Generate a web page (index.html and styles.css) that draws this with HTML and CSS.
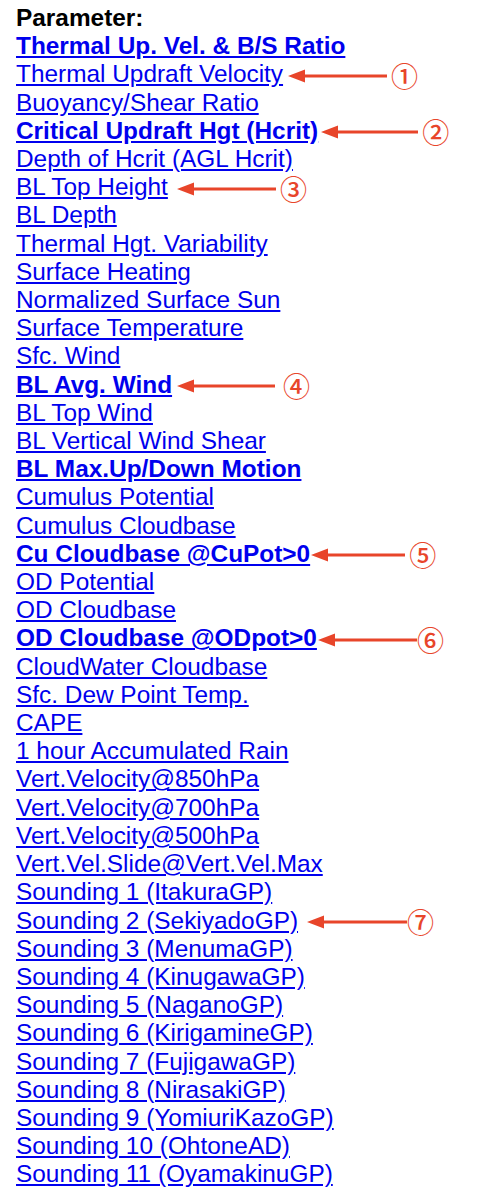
FILE: index.html
```html
<!DOCTYPE html>
<html lang="en">
<head>
    <meta charset="UTF-8">
    <meta name="viewport" content="width=device-width, initial-scale=1.0">
    <title>Parameter</title>
    <link rel="stylesheet" href="styles.css">
</head>
<body>
    <div class="param-list">
        <div class="param-title">Parameter:</div>

        <div><a href="#" class="strong">Thermal Up. Vel. &amp; B/S Ratio</a></div>
        <div>
            <a href="#">Thermal Updraft Velocity</a><span class="note"><svg class="arrow" width="99" height="14" viewBox="0 0 99 14"><path d="M0 7 L17 0.5 L17 5.5 L99 5.5 L99 8.5 L17 8.5 L17 13.5 Z"/></svg><span class="num">①</span></span>
        </div>
        <div><a href="#">Buoyancy/Shear Ratio</a></div>
        <div>
            <a href="#" class="strong">Critical Updraft Hgt (Hcrit)</a><span class="note note-tight"><svg class="arrow" width="97" height="14" viewBox="0 0 97 14"><path d="M0 7 L17 0.5 L17 5.5 L97 5.5 L97 8.5 L17 8.5 L17 13.5 Z"/></svg><span class="num">②</span></span>
        </div>
        <div><a href="#">Depth of Hcrit (AGL Hcrit)</a></div>
        <div>
            <a href="#">BL Top Height</a><span class="note note-wide"><svg class="arrow" width="99" height="14" viewBox="0 0 99 14"><path d="M0 7 L17 0.5 L17 5.5 L99 5.5 L99 8.5 L17 8.5 L17 13.5 Z"/></svg><span class="num">③</span></span>
        </div>
        <div><a href="#">BL Depth</a></div>
        <div><a href="#">Thermal Hgt. Variability</a></div>
        <div><a href="#">Surface Heating</a></div>
        <div><a href="#">Normalized Surface Sun</a></div>
        <div><a href="#">Surface Temperature</a></div>
        <div><a href="#">Sfc. Wind</a></div>
        <div>
            <a href="#" class="strong">BL Avg. Wind</a><span class="note"><svg class="arrow" width="98" height="14" viewBox="0 0 98 14"><path d="M0 7 L17 0.5 L17 5.5 L98 5.5 L98 8.5 L17 8.5 L17 13.5 Z"/></svg><span class="num num-far">④</span></span>
        </div>
        <div><a href="#">BL Top Wind</a></div>
        <div><a href="#">BL Vertical Wind Shear</a></div>
        <div><a href="#" class="strong">BL Max.Up/Down Motion</a></div>
        <div><a href="#">Cumulus Potential</a></div>
        <div><a href="#">Cumulus Cloudbase</a></div>
        <div>
            <a href="#" class="strong">Cu Cloudbase @CuPot&gt;0</a><span class="note note-flush"><svg class="arrow" width="94" height="14" viewBox="0 0 94 14"><path d="M0 7 L17 0.5 L17 5.5 L94 5.5 L94 8.5 L17 8.5 L17 13.5 Z"/></svg><span class="num">⑤</span></span>
        </div>
        <div><a href="#">OD Potential</a></div>
        <div><a href="#">OD Cloudbase</a></div>
        <div>
            <a href="#" class="strong">OD Cloudbase @ODpot&gt;0</a><span class="note note-flush"><svg class="arrow" width="99" height="14" viewBox="0 0 99 14"><path d="M0 7 L17 0.5 L17 5.5 L99 5.5 L99 8.5 L17 8.5 L17 13.5 Z"/></svg><span class="num num-near">⑥</span></span>
        </div>
        <div><a href="#">CloudWater Cloudbase</a></div>
        <div><a href="#">Sfc. Dew Point Temp.</a></div>
        <div><a href="#">CAPE</a></div>
        <div><a href="#">1 hour Accumulated Rain</a></div>
        <div><a href="#">Vert.Velocity@850hPa</a></div>
        <div><a href="#">Vert.Velocity@700hPa</a></div>
        <div><a href="#">Vert.Velocity@500hPa</a></div>
        <div><a href="#">Vert.Vel.Slide@Vert.Vel.Max</a></div>
        <div><a href="#">Sounding 1 (ItakuraGP)</a></div>
        <div>
            <a href="#">Sounding 2 (SekiyadoGP)</a><span class="note note-wide"><svg class="arrow" width="100" height="14" viewBox="0 0 100 14"><path d="M0 7 L17 0.5 L17 5.5 L100 5.5 L100 8.5 L17 8.5 L17 13.5 Z"/></svg><span class="num num-near">⑦</span></span>
        </div>
        <div><a href="#">Sounding 3 (MenumaGP)</a></div>
        <div><a href="#">Sounding 4 (KinugawaGP)</a></div>
        <div><a href="#">Sounding 5 (NaganoGP)</a></div>
        <div><a href="#">Sounding 6 (KirigamineGP)</a></div>
        <div><a href="#">Sounding 7 (FujigawaGP)</a></div>
        <div><a href="#">Sounding 8 (NirasakiGP)</a></div>
        <div><a href="#">Sounding 9 (YomiuriKazoGP)</a></div>
        <div><a href="#">Sounding 10 (OhtoneAD)</a></div>
        <div><a href="#">Sounding 11 (OyamakinuGP)</a></div>
    </div>
</body>
</html>
```

FILE: styles.css
```css
/* Parameter menu */
body {
    margin: 0;
    padding: 4px 0 0 16px;
    background: #ffffff;
    font-family: 'Liberation Sans', Arial, Helvetica, sans-serif;
    font-size: 24.4px;
    line-height: 28.2px;
    color: #000000;
}

.param-title {
    font-weight: bold;
}

.param-list a {
    color: #0000ee;
    text-decoration: underline;
}

.param-list a.strong {
    font-weight: bold;
}

/* red annotation arrows */
.note {
    display: inline-flex;
    align-items: center;
    height: 20px;
    margin-left: 5px;
    vertical-align: middle;
}

.note-tight {
    margin-left: 3px;
}

.note-flush {
    margin-left: 1px;
}

.note-wide {
    margin-left: 9px;
}

.arrow {
    display: block;
    fill: #e8452a;
}

.num {
    margin-left: 4px;
    font-family: 'Noto Sans CJK JP', sans-serif;
    font-size: 27px;
    font-weight: 500;
    line-height: 20px;
    color: #e8452a;
}

.num-near {
    margin-left: 0;
}

.num-far {
    margin-left: 8px;
}
```
